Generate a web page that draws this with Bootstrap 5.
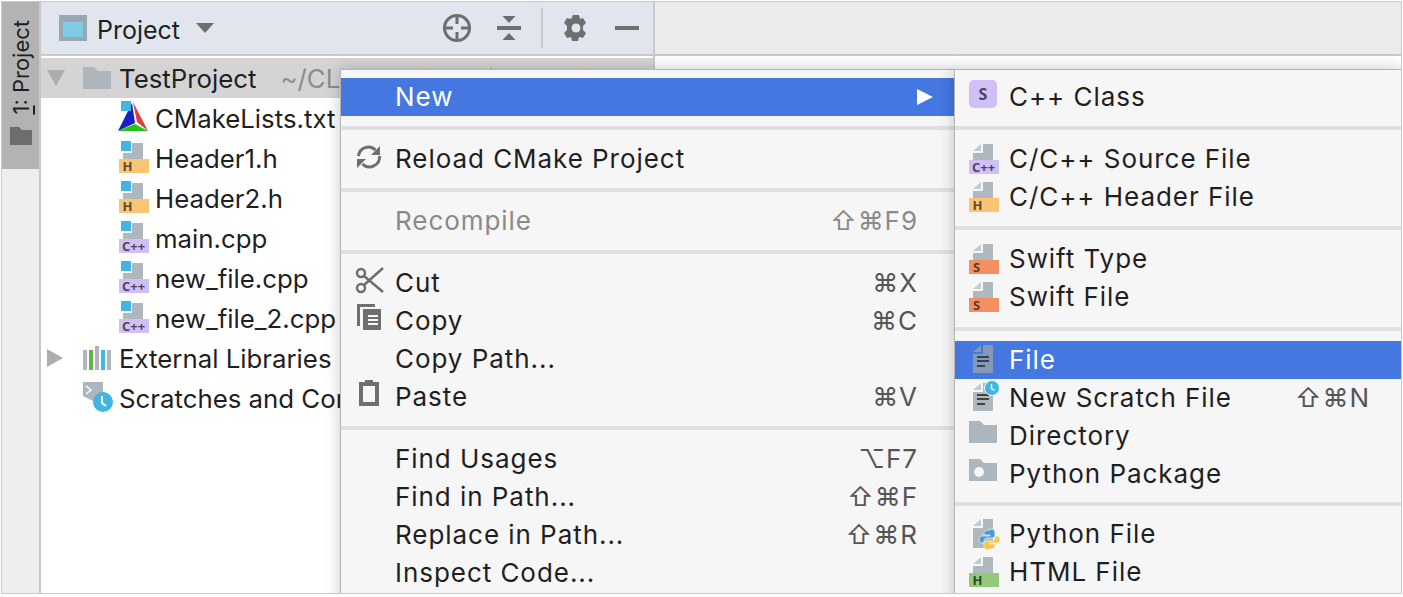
<!DOCTYPE html>
<html>

<head>
    <title>New File Menu</title>
    <link href="https://cdn.jsdelivr.net/npm/bootstrap@5.3.0/dist/css/bootstrap.min.css" rel="stylesheet">
    <style>
        html, body {
            height: 597px;
            overflow: hidden;
            background: #fff;
        }

        body {
            font-family: Inter, "Liberation Sans", sans-serif;
            font-size: 25.8px;
            color: #1f1f1f;
        }

        svg {
            overflow: visible;
            flex: none;
        }

        .ide-frame {
            position: relative;
            width: 1401px;
            height: 593px;
            margin: 1px 0 0 1px;
            border: 1px solid #c9c9c9;
            overflow: hidden;
        }

        .tool-strip {
            width: 39px;
            background: #eeeeee;
            border-right: 2px solid #c8c8c8;
        }

        .strip-tab {
            height: 167px;
            width: 37px;
            background: #b3b3b3;
            padding-top: 18px;
            gap: 12px;
            font-size: 22px;
        }

        .strip-label {
            writing-mode: vertical-rl;
            transform: rotate(180deg);
            line-height: 1;
        }

        .project-pane {
            width: 614px;
            border-right: 2px solid #c9c9c9;
        }

        .pane-head {
            height: 54px;
            font-size: 25px;
            background: #e1e5ed;
            border-bottom: 2px solid #c9c9c9;
            padding-left: 18px;
        }

        .head-title {
            margin-left: 10px;
            padding-top: 5px;
        }

        .pane-right {
            height: 54px;
            background: #ebebeb;
            border-bottom: 2px solid #c9c9c9;
        }

        .head-tools {
            margin-right: 14px;
        }

        .tool-collapse {
            margin-left: 25px;
        }

        .head-divider {
            width: 2px;
            height: 40px;
            margin-left: 20px;
            background: #c9c9c9;
        }

        .tool-gear {
            margin-left: 20px;
        }

        .tool-hide {
            margin-left: 26px;
        }

        .tree-row {
            height: 40px;
            white-space: nowrap;
        }

        .tree-row span:not(.twist) {
            padding-top: 2px;
        }

        .tree-row.is-selected {
            background: #d4d4d4;
        }

        .tree-list {
            padding-top: 2px;
        }

        .level-1 {
            padding-left: 6px;
        }

        .level-2 {
            padding-left: 78px;
        }

        .tree-icon {
            margin-top: -2px;
            margin-right: 6px;
        }

        .twist {
            width: 36px;
            flex: none;
        }

        .tree-path {
            color: #8c8c8c;
            margin-left: 24px;
        }

        .ide-menu {
            --bs-dropdown-padding-y: 8px;
            --bs-dropdown-border-radius: 0;
            --bs-dropdown-bg: #f6f6f6;
            --bs-dropdown-border-color: #b5b5b5;
            --bs-dropdown-font-size: 26px;
            --bs-dropdown-color: #1f1f1f;
            --bs-dropdown-link-color: #1f1f1f;
            --bs-dropdown-link-hover-color: #1f1f1f;
            --bs-dropdown-link-hover-bg: transparent;
            --bs-dropdown-link-active-color: #fff;
            --bs-dropdown-link-active-bg: #4477e0;
            --bs-dropdown-link-disabled-color: #8a8a8a;
            --bs-dropdown-item-padding-y: 0;
            --bs-dropdown-item-padding-x: 0;
            --bs-dropdown-divider-bg: #e0e0e0;
            --bs-dropdown-divider-margin-y: 10px;
            height: 540px;
            overflow: hidden;
            letter-spacing: .95px;
            box-shadow: 0 0 14px rgba(0, 0, 0, .22);
        }

        .main-menu {
            top: 67px;
            left: 338px;
            width: 616px;
        }

        .sub-menu {
            top: 67px;
            left: 952px;
            width: 448px;
        }

        .ide-menu .dropdown-divider {
            border-top-width: 4px;
            opacity: 1;
        }

        .ide-menu .divider-wide {
            margin: 11px 0 10px;
        }

        .ide-menu .divider-tight {
            margin: 9px 0;
        }

        .ide-menu .dropdown-item {
            height: 38px;
            display: flex;
            align-items: center;
            position: relative;
            padding-bottom: 2px;
        }

        .main-menu .dropdown-item {
            padding-left: 54px;
            padding-right: 37px;
        }

        .sub-menu .dropdown-item {
            padding-left: 54px;
            padding-right: 31px;
        }

        .item-icon {
            position: absolute;
            left: 13px;
            top: 3px;
        }

        .sub-menu .item-icon {
            left: 14px;
            top: 2px;
        }

        .sub-menu .item-icon.is-folder {
            top: 4px;
        }

        .shortcut {
            margin-left: auto;
            color: #555;
        }

        .dropdown-item.disabled .shortcut {
            color: #8a8a8a;
        }

        .sub-arrow {
            margin-left: auto;
            margin-top: 2px;
            margin-right: -15px;
        }

        .badge-text {
            font-family: "Open Sans", "Liberation Sans", sans-serif;
            font-weight: 700;
            letter-spacing: 0;
        }
    </style>
</head>

<body>
    <!-- shared icon shapes -->
    <svg width="0" height="0" style="position:absolute">
        <defs>
            <symbol id="folder" viewBox="0 0 28 22"><path d="M0 0h11l4 4h13v18H0z" fill="#adb6bc"/></symbol>
            <symbol id="sheet" viewBox="0 0 30 32"><path d="M4 9l8-7v7z" fill="#c5cbd0"/><path d="M14 2h10v16H4v-7h10z" fill="#afb8bf"/></symbol>
            <symbol id="tree-sheet" viewBox="0 0 30 32"><path d="M13 2h11v16H4v-6h9z" fill="#afb8bf"/><rect x="2" y="0" width="10" height="10" fill="#40b6e0"/></symbol>
        </defs>
    </svg>

    <div class="ide-frame d-flex">
        <!-- left tool strip -->
        <div class="tool-strip flex-shrink-0">
            <div class="strip-tab d-flex flex-column align-items-center">
                <span class="strip-label"><u>1</u>: Project</span>
                <svg width="22" height="18" viewBox="0 0 22 18"><path d="M0 0h9l3 3h10v15H0z" fill="#6e6e6e"/></svg>
            </div>
        </div>

        <div class="project-pane flex-shrink-0">
            <div class="pane-head d-flex align-items-center">
                <svg width="28" height="26" viewBox="0 0 28 26"><rect width="28" height="26" fill="#9aa7b0"/><rect x="4" y="7" width="20" height="15" fill="#7ecbe6"/></svg>
                <span class="head-title">Project</span>
                <svg class="ms-3" width="18" height="10" viewBox="0 0 18 10"><path d="M0 0h18L9 10z" fill="#6e6e6e"/></svg>
                <div class="head-tools ms-auto d-flex align-items-center">
                    <svg width="30" height="30" viewBox="0 0 30 30" fill="none" stroke="#6e6e6e" stroke-width="3"><circle cx="15" cy="15" r="12.5"/><path d="M15 2v9M15 19v9M2 15h9M19 15h9"/></svg>
                    <svg class="tool-collapse" width="24" height="26" viewBox="0 0 24 26" fill="#6e6e6e"><path d="M0 11h24v4H0zM5.500 1h13L12 8zM12 18l6.500 7h-13z"/></svg>
                    <div class="head-divider"></div>
                    <svg class="tool-gear" width="26" height="28" viewBox="0 0 26 28"><path d="M10 1h6l1 4 3-1 3 5-3 3v4l3 3-3 5-4-1-1 4h-6l-1-4-4 1-3-5 3-3v-4L1 9l3-5 4 1z" fill="#6e6e6e"/><circle cx="13" cy="14" r="4.500" fill="#e1e5ed"/></svg>
                    <svg class="tool-hide" width="24" height="4" viewBox="0 0 24 4"><rect width="24" height="4" fill="#6e6e6e"/></svg>
                </div>
            </div>

            <!-- project tree -->
            <div class="tree-list">
                <div class="tree-row is-selected level-1 d-flex align-items-center">
                    <span class="twist"><svg width="18" height="16" viewBox="0 0 18 16" class="d-block"><path d="M0 0h18L9 16z" fill="#adadad"/></svg></span>
                    <svg width="28" height="22" class="me-2"><use href="#folder"/></svg>
                    <span>TestProject</span><span class="tree-path">~/CLion Projects/TestProject</span>
                </div>
                <div class="tree-row level-2 d-flex align-items-center">
                    <svg width="30" height="32" viewBox="0 0 30 32" class="tree-icon"><path d="M13 2L-1 30 16 22z" fill="#1b1fc0"/><path d="M14 1l15 29-11-9z" fill="#d8403c"/><path d="M-1 30h30l-13-7z" fill="#22c41a"/><rect x="2" y="0" width="10" height="10" fill="#40b6e0"/></svg>
                    <span>CMakeLists.txt</span>
                </div>
                <div class="tree-row level-2 d-flex align-items-center">
                    <svg width="30" height="32" viewBox="0 0 30 32" class="tree-icon"><use href="#tree-sheet" width="30" height="32"/><rect y="18" width="30" height="14" fill="#f9c474"/><text x="3.500" y="30" class="badge-text" font-size="13" fill="#5a4a30">H</text></svg>
                    <span>Header1.h</span>
                </div>
                <div class="tree-row level-2 d-flex align-items-center">
                    <svg width="30" height="32" viewBox="0 0 30 32" class="tree-icon"><use href="#tree-sheet" width="30" height="32"/><rect y="18" width="30" height="14" fill="#f9c474"/><text x="3.500" y="30" class="badge-text" font-size="13" fill="#5a4a30">H</text></svg>
                    <span>Header2.h</span>
                </div>
                <div class="tree-row level-2 d-flex align-items-center">
                    <svg width="30" height="32" viewBox="0 0 30 32" class="tree-icon"><use href="#tree-sheet" width="30" height="32"/><rect y="18" width="30" height="14" fill="#d1bff7"/><text x="3" y="29.500" class="badge-text" font-size="13" fill="#4e4360">C++</text></svg>
                    <span>main.cpp</span>
                </div>
                <div class="tree-row level-2 d-flex align-items-center">
                    <svg width="30" height="32" viewBox="0 0 30 32" class="tree-icon"><use href="#tree-sheet" width="30" height="32"/><rect y="18" width="30" height="14" fill="#d1bff7"/><text x="3" y="29.500" class="badge-text" font-size="13" fill="#4e4360">C++</text></svg>
                    <span>new_file.cpp</span>
                </div>
                <div class="tree-row level-2 d-flex align-items-center">
                    <svg width="30" height="32" viewBox="0 0 30 32" class="tree-icon"><use href="#tree-sheet" width="30" height="32"/><rect y="18" width="30" height="14" fill="#d1bff7"/><text x="3" y="29.500" class="badge-text" font-size="13" fill="#4e4360">C++</text></svg>
                    <span>new_file_2.cpp</span>
                </div>
                <div class="tree-row level-1 d-flex align-items-center">
                    <span class="twist"><svg width="16" height="18" viewBox="0 0 16 18" class="d-block"><path d="M0 0l16 9L0 18z" fill="#adadad"/></svg></span>
                    <svg width="28" height="24" viewBox="0 0 28 24" class="me-2"><path d="M0 4h4v20H0zM12 0h4v24h-4zM24 4h4v20h-4z" fill="#adb6bc"/><rect x="6" y="4" width="4" height="20" fill="#62b543"/><rect x="18" y="4" width="4" height="20" fill="#40b6e0"/></svg>
                    <span>External Libraries</span>
                </div>
                <div class="tree-row level-1 d-flex align-items-center">
                    <span class="twist"></span>
                    <svg width="30" height="30" viewBox="0 0 30 30" class="tree-icon"><path d="M0 0h20v9l-8 11-12-6z" fill="#adb6bc"/><path d="M3 4l5 4-5 4" fill="none" stroke="#fff" stroke-width="1.500"/><circle cx="20" cy="20" r="10" fill="#40b6e0"/><path d="M19 14v7l4 3" fill="none" stroke="#fff" stroke-width="2"/></svg>
                    <span>Scratches and Consoles</span>
                </div>
            </div>
        </div>
        <div class="pane-right flex-grow-1"></div>

        <!-- context menu -->
        <div class="dropdown-menu show ide-menu main-menu">
            <a class="dropdown-item active" href="#">New
                <svg class="sub-arrow" width="16" height="16" viewBox="0 0 16 16"><path d="M0 0l16 8-16 8z" fill="#fff"/></svg>
            </a>
            <hr class="dropdown-divider">
            <a class="dropdown-item" href="#">
                <svg class="item-icon" width="30" height="30" viewBox="0 0 30 30" fill="none" stroke="#6e6e6e" stroke-width="3"><path d="M4.500 13a10 10 0 0 1 17-6M25.500 13a10 10 0 0 1-17 8"/><path d="M26 3v9h-9z" fill="#6e6e6e" stroke="none"/><path d="M3 25v-9h9z" fill="#6e6e6e" stroke="none"/></svg>
                Reload CMake Project</a>
            <hr class="dropdown-divider">
            <a class="dropdown-item disabled" href="#">Recompile<span class="shortcut">⇧⌘F9</span></a>
            <hr class="dropdown-divider">
            <a class="dropdown-item" href="#">
                <svg class="item-icon" width="30" height="30" viewBox="0 0 30 30" fill="none" stroke="#6e6e6e" stroke-width="2.500"><circle cx="7" cy="6" r="4"/><circle cx="7" cy="21" r="4"/><path d="M10 9l19 16M10 18L29 1"/></svg>
                Cut<span class="shortcut">⌘X</span></a>
            <a class="dropdown-item" href="#">
                <svg class="item-icon" width="30" height="30" viewBox="0 0 30 30"><path d="M3-1h18v3H6v19H3z" fill="#6e6e6e"/><path d="M9 4h18v21H9z" fill="#6e6e6e"/><path d="M14 11h10M14 15h10M14 19h10" stroke="#f6f6f6" stroke-width="2"/></svg>
                Copy<span class="shortcut">⌘C</span></a>
            <a class="dropdown-item" href="#">Copy Path...</a>
            <a class="dropdown-item" href="#">
                <svg class="item-icon" width="30" height="30" viewBox="0 0 30 30"><path d="M5 1h6v-2h8v2h6v24H5z" fill="#6e6e6e"/><rect x="9" y="5" width="12" height="16" fill="#f6f6f6"/></svg>
                Paste<span class="shortcut">⌘V</span></a>
            <hr class="dropdown-divider">
            <a class="dropdown-item" href="#">Find Usages<span class="shortcut">⌥F7</span></a>
            <a class="dropdown-item" href="#">Find in Path...<span class="shortcut">⇧⌘F</span></a>
            <a class="dropdown-item" href="#">Replace in Path...<span class="shortcut">⇧⌘R</span></a>
            <a class="dropdown-item" href="#">Inspect Code...</a>
        </div>

        <!-- New submenu -->
        <div class="dropdown-menu show ide-menu sub-menu">
            <a class="dropdown-item" href="#">
                <svg class="item-icon" width="28" height="28" viewBox="0 0 28 28"><rect width="28" height="28" rx="5" fill="#d1bff7"/><text x="14" y="20" text-anchor="middle" class="badge-text" font-size="16" fill="#4e4360">S</text></svg>
                C++ Class</a>
            <hr class="dropdown-divider">
            <a class="dropdown-item" href="#">
                <svg class="item-icon" width="30" height="32" viewBox="0 0 30 32"><use href="#sheet" width="30" height="32"/><rect y="18" width="30" height="14" fill="#d1bff7"/><text x="3" y="29.500" class="badge-text" font-size="13" fill="#4e4360">C++</text></svg>
                C/C++ Source File</a>
            <a class="dropdown-item" href="#">
                <svg class="item-icon" width="30" height="32" viewBox="0 0 30 32"><use href="#sheet" width="30" height="32"/><rect y="18" width="30" height="14" fill="#f9c474"/><text x="3.500" y="30" class="badge-text" font-size="13" fill="#5a4a30">H</text></svg>
                C/C++ Header File</a>
            <hr class="dropdown-divider">
            <a class="dropdown-item" href="#">
                <svg class="item-icon" width="30" height="32" viewBox="0 0 30 32"><use href="#sheet" width="30" height="32"/><rect y="18" width="30" height="14" fill="#f4905f"/><text x="4" y="30" class="badge-text" font-size="13" fill="#5e3a28">S</text></svg>
                Swift Type</a>
            <a class="dropdown-item" href="#">
                <svg class="item-icon" width="30" height="32" viewBox="0 0 30 32"><use href="#sheet" width="30" height="32"/><rect y="18" width="30" height="14" fill="#f4905f"/><text x="4" y="30" class="badge-text" font-size="13" fill="#5e3a28">S</text></svg>
                Swift File</a>
            <hr class="dropdown-divider divider-wide">
            <a class="dropdown-item active" href="#">
                <svg class="item-icon" width="30" height="32" viewBox="0 0 30 32"><path d="M4 9l8-7v7z" fill="#8499b8"/><path d="M14 2h10v28H4V11h10z" fill="#8499b8"/><path d="M8 14h12M8 18h12M8 23h8" stroke="#3a3f4a" stroke-width="2"/></svg>
                File</a>
            <a class="dropdown-item" href="#">
                <svg class="item-icon" width="30" height="32" viewBox="0 0 30 32"><path d="M4 9l8-7v7z" fill="#c5cbd0"/><path d="M14 2h10v28H4V11h10z" fill="#afb8bf"/><path d="M8 14h12M8 18h12M8 23h8" stroke="#444" stroke-width="2"/><circle cx="23" cy="7" r="7.500" fill="#40b6e0" stroke="#f6f6f6"/><path d="M22.500 3v4.500l3 2" fill="none" stroke="#fff" stroke-width="1.500"/></svg>
                New Scratch File<span class="shortcut">⇧⌘N</span></a>
            <a class="dropdown-item" href="#">
                <svg class="item-icon is-folder" width="28" height="22" viewBox="0 0 28 22"><path d="M0 0h11l4 4h13v18H0z" fill="#adb6bc"/></svg>
                Directory</a>
            <a class="dropdown-item" href="#">
                <svg class="item-icon is-folder" width="28" height="22" viewBox="0 0 28 22"><path d="M0 0h11l4 4h13v18H0z" fill="#adb6bc"/><circle cx="10" cy="13" r="5" fill="#f6f6f6"/></svg>
                Python Package</a>
            <hr class="dropdown-divider divider-tight">
            <a class="dropdown-item" href="#">
                <svg class="item-icon" width="30" height="32" viewBox="0 0 30 32"><path d="M4 9l8-7v7z" fill="#c5cbd0"/><path d="M14 2h10v29H4V11h10z" fill="#afb8bf"/><path d="M21 13c-4 0-6 1-6 3v2h6v1h-8c-2 0-3 1.500-3 3.500s1 3.500 3 3.500h2v-2c0-2 2-3 3-3h5c2 0 3-1 3-3v-3c0-2-2-3-5-3z" fill="#4a9cd6" stroke="#f6f6f6" stroke-width=".7"/><path d="M21 13c-4 0-6 1-6 3v2h6v1h-8c-2 0-3 1.500-3 3.500s1 3.500 3 3.500h2v-2c0-2 2-3 3-3h5c2 0 3-1 3-3v-3c0-2-2-3-5-3z" fill="#f8c73c" stroke="#f6f6f6" stroke-width=".7" transform="rotate(180 20.500 22.500)"/></svg>
                Python File</a>
            <a class="dropdown-item" href="#">
                <svg class="item-icon" width="30" height="32" viewBox="0 0 30 32"><use href="#sheet" width="30" height="32"/><rect y="18" width="30" height="14" fill="#93c97a"/><text x="3.500" y="30" class="badge-text" font-size="13" fill="#2f4a24">H</text></svg>
                HTML File</a>
        </div>
    </div>

    <script src="https://cdn.jsdelivr.net/npm/bootstrap@5.3.0/dist/js/bootstrap.bundle.min.js"></script>
</body>

</html>
